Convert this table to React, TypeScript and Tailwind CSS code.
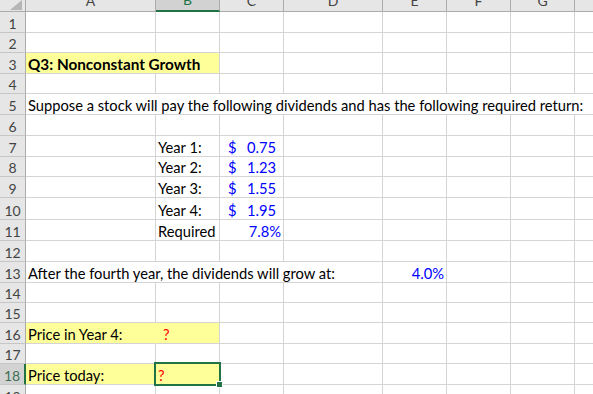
import React from 'react';

const COLS = ['A', 'B', 'C', 'D', 'E', 'F', 'G', 'H'];

// row heights include the 1px gridline at the bottom
const ROW_HEIGHTS = [21, 20, 21, 20, 21, 21, 21, 20, 21, 22, 21, 21, 21, 20, 20, 21, 20, 21, 21];

const font = { fontFamily: 'Lato, "Open Sans", sans-serif' };

type CellProps = {
  className?: string;
  color?: string;
  size?: string;
  children?: React.ReactNode;
};

const Cell: React.FC<CellProps> = ({ className = '', color = 'text-black', size = 'text-[14.7px]', children }) => (
  <div
    className={`relative flex items-end overflow-visible whitespace-nowrap border-r border-b border-[#d4d4d4] pb-[1px] leading-none ${size} ${color} ${className}`}
  >
    {children}
  </div>
);

const Blank: React.FC<{ n: number }> = ({ n }) => (
  <>
    {Array.from({ length: n }).map((_, i) => (
      <Cell key={i} />
    ))}
  </>
);

const RowHead: React.FC<{ n: number; active?: boolean }> = ({ n, active }) => (
  <div
    className={`flex items-end justify-center border-b pb-[1px] text-[14px] leading-none ${
      active
        ? 'border-b-[#c6c6c6] border-r-2 border-r-[#217346] bg-[#d2d2d2] text-[#3f6f55]'
        : 'border-b-[#c6c6c6] border-r border-r-[#ababab] bg-[#e6e6e6] text-[#444]'
    }`}
  >
    {n}
  </div>
);

const Money: React.FC<{ v: string }> = ({ v }) => (
  <Cell className="justify-between pl-[8px] pr-[7px]" color="text-[#0000ff]">
    <span>$</span>
    <span>{v}</span>
  </Cell>
);

export default function App() {
  const rows: React.ReactNode[] = [
    // 1
    <Blank key="r1" n={8} />,
    // 2
    <Blank key="r2" n={8} />,
    // 3
    <React.Fragment key="r3">
      <Cell className="col-span-2 bg-[#ffff99] pl-[2px] font-bold" size="text-[15.3px]">
        Q3: Nonconstant Growth
      </Cell>
      <Blank n={6} />
    </React.Fragment>,
    // 4
    <Blank key="r4" n={8} />,
    // 5
    <Cell key="r5" className="col-span-8 pl-[2px]">
      Suppose a stock will pay the following dividends and has the following required return:
    </Cell>,
    // 6
    <Blank key="r6" n={8} />,
    // 7-10
    ...[
      ['Year 1:', '0.75'],
      ['Year 2:', '1.23'],
      ['Year 3:', '1.55'],
      ['Year 4:', '1.95'],
    ].map(([label, v]) => (
      <React.Fragment key={label}>
        <Cell />
        <Cell className="pl-[2px]">{label}</Cell>
        <Money v={v} />
        <Blank n={5} />
      </React.Fragment>
    )),
    // 11
    <React.Fragment key="r11">
      <Cell />
      <Cell className="pl-[2px]">Required</Cell>
      <Cell className="justify-end pr-[2px]" color="text-[#0000ff]">7.8%</Cell>
      <Blank n={5} />
    </React.Fragment>,
    // 12
    <Blank key="r12" n={8} />,
    // 13
    <React.Fragment key="r13">
      <Cell className="col-span-4 pl-[2px]">After the fourth year, the dividends will grow at:</Cell>
      <Cell className="justify-end pr-[2px]" color="text-[#0000ff]">4.0%</Cell>
      <Blank n={3} />
    </React.Fragment>,
    // 14-15
    <Blank key="r14" n={8} />,
    <Blank key="r15" n={8} />,
    // 16
    <React.Fragment key="r16">
      <Cell className="border-r-[#ffff99] bg-[#ffff99] pl-[2px]">Price in Year 4:</Cell>
      <Cell className="bg-[#ffff99] pl-[7px]" color="text-[#ff0000]">?</Cell>
      <Blank n={6} />
    </React.Fragment>,
    // 17
    <Blank key="r17" n={8} />,
    // 18
    <React.Fragment key="r18">
      <Cell className="border-r-[#ffff99] bg-[#ffff99] pl-[2px]">Price today:</Cell>
      <Cell className="z-10 bg-[#ffff99] pl-[2px]" color="text-[#ff0000]">
        ?
        {/* active cell selection + fill handle */}
        <div className="pointer-events-none absolute -left-[2px] -top-[2px] h-[24px] w-[67px] border-2 border-[#217346]" />
        <div className="pointer-events-none absolute left-[60px] top-[17px] h-[7px] w-[7px] border border-white bg-[#217346]" />
      </Cell>
      <Blank n={6} />
    </React.Fragment>,
    // 19
    <Blank key="r19" n={8} />,
  ];

  return (
    <div className="h-[394px] w-[593px] overflow-hidden bg-white" style={font}>
      <div
        className="grid w-max grid-cols-[26px_130px_64px_64px_99px_64px_64px_64px_64px]"
        style={{ gridTemplateRows: `12px ${ROW_HEIGHTS.map((h) => `${h}px`).join(' ')}` }}
      >
        {/* corner */}
        <div className="flex items-start justify-end border-r border-b border-[#ababab] bg-[#e6e6e6] pr-[3px]">
          <svg width="12" height="10" viewBox="0 0 12 10">
            <polygon points="12,0 12,10 0,10" fill="#b5b5b5" />
          </svg>
        </div>
        {/* column headers */}
        {COLS.map((c) => (
          <div
            key={c}
            className={`flex items-end justify-center overflow-hidden border-r border-[#ababab] text-[14px] leading-none ${
              c === 'B'
                ? 'border-b-2 border-b-[#217346] bg-[#d2d2d2] text-[#217346]'
                : 'border-b border-b-[#ababab] bg-[#e6e6e6] text-[#444]'
            }`}
          >
            <span className="mb-[3px]">{c}</span>
          </div>
        ))}

        {rows.map((row, i) => (
          <React.Fragment key={i}>
            <RowHead n={i + 1} active={i === 17} />
            {row}
          </React.Fragment>
        ))}
      </div>
    </div>
  );
}
